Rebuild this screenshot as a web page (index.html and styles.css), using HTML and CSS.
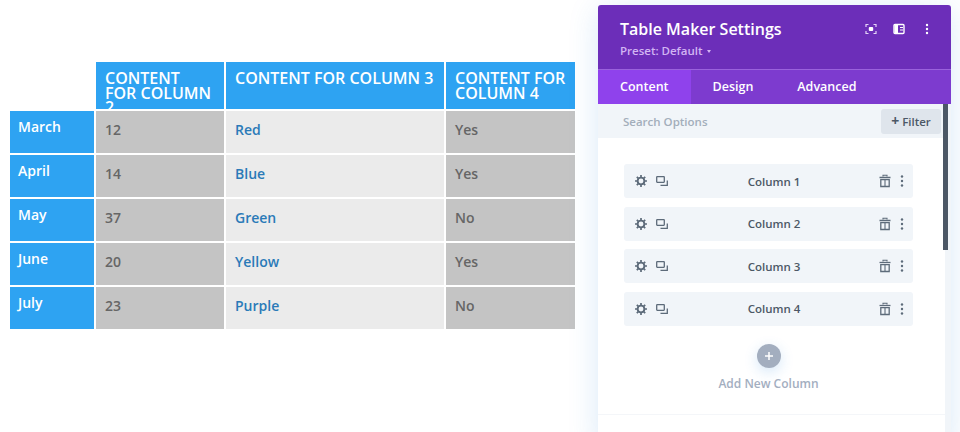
FILE: index.html
```html
<!DOCTYPE html>
<html lang="en">
<head>
<meta charset="utf-8">
<title>Table Maker Settings</title>
<link rel="stylesheet" href="styles.css">
</head>
<body>
<div class="page">
  <main class="table-wrap">
    <div class="grid">
      <div class="cell blank"></div>
      <div class="cell head">CONTENT FOR COLUMN 2</div>
      <div class="cell head">CONTENT FOR COLUMN 3</div>
      <div class="cell head">CONTENT FOR COLUMN 4</div>

      <div class="cell month">March</div><div class="cell dark">12</div><div class="cell light">Red</div><div class="cell dark">Yes</div>
      <div class="cell month">April</div><div class="cell dark">14</div><div class="cell light">Blue</div><div class="cell dark">Yes</div>
      <div class="cell month">May</div><div class="cell dark">37</div><div class="cell light">Green</div><div class="cell dark">No</div>
      <div class="cell month">June</div><div class="cell dark">20</div><div class="cell light">Yellow</div><div class="cell dark">Yes</div>
      <div class="cell month">July</div><div class="cell dark">23</div><div class="cell light">Purple</div><div class="cell dark">No</div>
    </div>
  </main>

  <aside class="panel">
    <header class="panel-head">
      <div>
        <h1 class="title">Table Maker Settings</h1>
        <div class="preset">Preset: Default <span class="caret"></span></div>
      </div>
      <div class="head-icons">
        <svg class="hicon" viewBox="0 0 12 12" width="12" height="12"><path d="M1 4V1.500H3.500M8.500 1.500H11V4M11 8V10.500H8.500M3.500 10.500H1V8" fill="none" stroke="#e4d4f7" stroke-width="1.200"/><rect x="3.800" y="4" width="4.400" height="4" rx="1" fill="#fff"/></svg>
        <svg class="hicon" viewBox="0 0 12 12" width="12" height="12"><rect x="1" y="1.500" width="10" height="9" rx="1" fill="none" stroke="#fff" stroke-width="1.400"/><rect x="1.500" y="2" width="3.500" height="8" fill="#fff"/><path d="M7 4.500h3M7 7h3" stroke="#fff"/></svg>
        <svg class="hicon" viewBox="0 0 12 12" width="12" height="12"><circle cx="6" cy="2" r="1.200" fill="#fff"/><circle cx="6" cy="6" r="1.200" fill="#fff"/><circle cx="6" cy="10" r="1.200" fill="#fff"/></svg>
      </div>
    </header>
    <nav class="tabs">
      <div class="tab active">Content</div>
      <div class="tab">Design</div>
      <div class="tab">Advanced</div>
    </nav>
    <div class="search">
      <span class="search-label">Search Options</span>
      <div class="filter"><span class="plus">+</span> Filter</div>
    </div>
    <div class="scrollthumb"></div>
    <div class="panel-body">
      <div class="rows">
        <div class="row">
          <span class="row-left">
            <svg viewBox="0 0 14 14" width="14" height="14"><use href="#gear"/></svg>
            <svg viewBox="0 0 14 14" width="14" height="14"><use href="#copy"/></svg>
          </span>
          <span class="row-label">Column 1</span>
          <span class="row-right">
            <svg viewBox="0 0 12 14" width="12" height="14"><use href="#trash"/></svg>
            <svg viewBox="0 0 4 14" width="4" height="14"><use href="#dots"/></svg>
          </span>
        </div>
        <div class="row">
          <span class="row-left">
            <svg viewBox="0 0 14 14" width="14" height="14"><use href="#gear"/></svg>
            <svg viewBox="0 0 14 14" width="14" height="14"><use href="#copy"/></svg>
          </span>
          <span class="row-label">Column 2</span>
          <span class="row-right">
            <svg viewBox="0 0 12 14" width="12" height="14"><use href="#trash"/></svg>
            <svg viewBox="0 0 4 14" width="4" height="14"><use href="#dots"/></svg>
          </span>
        </div>
        <div class="row">
          <span class="row-left">
            <svg viewBox="0 0 14 14" width="14" height="14"><use href="#gear"/></svg>
            <svg viewBox="0 0 14 14" width="14" height="14"><use href="#copy"/></svg>
          </span>
          <span class="row-label">Column 3</span>
          <span class="row-right">
            <svg viewBox="0 0 12 14" width="12" height="14"><use href="#trash"/></svg>
            <svg viewBox="0 0 4 14" width="4" height="14"><use href="#dots"/></svg>
          </span>
        </div>
        <div class="row">
          <span class="row-left">
            <svg viewBox="0 0 14 14" width="14" height="14"><use href="#gear"/></svg>
            <svg viewBox="0 0 14 14" width="14" height="14"><use href="#copy"/></svg>
          </span>
          <span class="row-label">Column 4</span>
          <span class="row-right">
            <svg viewBox="0 0 12 14" width="12" height="14"><use href="#trash"/></svg>
            <svg viewBox="0 0 4 14" width="4" height="14"><use href="#dots"/></svg>
          </span>
        </div>
      </div>
      <div class="add">
        <div class="add-btn">
          <svg viewBox="0 0 10 10" width="10" height="10"><path d="M5 1v8M1 5h8" stroke="#fff" stroke-width="1.500"/></svg>
        </div>
        <div class="add-label">Add New Column</div>
      </div>
      <div class="divider"></div>
    </div>
  </aside>
</div>
<svg class="defs" width="0" height="0">
  <defs>
    <g id="gear">
      <circle cx="7" cy="7" r="3.400" fill="none" stroke="#5d6b7a" stroke-width="1.900"/>
      <path d="M7 1v2.500M7 10.500V13M1 7h2.500M10.500 7H13M2.800 2.800l1.800 1.800M9.400 9.400l1.800 1.800M11.200 2.800L9.400 4.600M4.600 9.400l-1.800 1.800" stroke="#5d6b7a" stroke-width="1.700"/>
    </g>
    <g id="copy" fill="none" stroke="#5d6b7a" stroke-width="1.300">
      <rect x="1.700" y="2.700" width="7.600" height="5.600" rx="0.500"/>
      <path d="M12.300 6.500V11.300H5.500"/>
    </g>
    <g id="trash" fill="none" stroke="#5d6b7a">
      <path d="M0.500 3.500H11.500" stroke-width="1.300"/>
      <path d="M4 2.500V1.200H8V2.500" stroke-width="1.100"/>
      <path d="M1.800 5.700H10.200V12.500H1.800Z" stroke-width="1.300"/>
      <path d="M6 6V12" stroke-width="1.100"/>
    </g>
    <g id="dots" fill="#5d6b7a">
      <circle cx="2" cy="2.500" r="1.200"/>
      <circle cx="2" cy="7" r="1.200"/>
      <circle cx="2" cy="11.500" r="1.200"/>
    </g>
  </defs>
</svg>
</body>
</html>
```
FILE: styles.css
```css
* { box-sizing: border-box; }
html, body { margin: 0; padding: 0; height: 100%; overflow: hidden; background: #fff; }
body { font-family: "Open Sans", "Noto Sans", sans-serif; }
.defs { position: absolute; }

.page { display: flex; width: 960px; height: 432px; overflow: hidden; }

.table-wrap { width: 598px; flex: none; padding: 62px 0 0 10px; }
.grid {
  display: grid;
  width: 564px;
  grid-template-columns: 84px 128px 218px 129px;
  grid-template-rows: 47px repeat(5, 42px);
  gap: 2px;
  column-gap: 2px;
}
.cell { font-size: 14px; line-height: 14px; font-weight: 600; padding: 12px 8px; }
.blank { background: #fff; }
.head { background: #2ea3f2; color: #fff; font-size: 16px; line-height: 14.500px; font-weight: 600; padding: 9px 9px; }
.month { background: #2ea3f2; color: #fff; padding: 9px 8px; font-size: 14px; line-height: 14px; }
.dark { background: #c4c4c4; color: #666; padding: 12px 9px; }
.light { background: #ebebeb; color: #2a7ab8; padding: 12px 9px; }

.panel {
  width: 353px;
  height: 440px;
  margin-top: 5px;
  flex: none;
  position: relative;
  background: #f1f5f9;
  border-radius: 3px 3px 0 0;
  box-shadow: 0 5px 30px rgba(43, 135, 218, .18);
  overflow: hidden;
}
.panel-head {
  height: 64px;
  background: #6c2eb9;
  padding: 14px 18px 0 22px;
  display: flex;
  justify-content: space-between;
  align-items: flex-start;
}
.title { margin: 0; color: #fff; font-size: 16px; line-height: 21px; font-weight: 600; }
.preset { color: #d2b5f3; font-size: 11.500px; line-height: 14px; margin-top: 4px; font-weight: 600; }
.caret { display: inline-block; width: 0; height: 0; border: 2.500px solid transparent; border-top: 3px solid #d2b5f3; border-bottom: 0; vertical-align: 2px; margin-left: 1px; }
.head-icons { display: flex; gap: 16px; padding-top: 4px; }
.hicon { display: block; }

.tabs {
  display: flex;
  height: 35px;
  background: #7d3bcf;
  border-top: 1px solid #9a62dc;
}
.tab { color: #fff; font-size: 12.500px; font-weight: 600; line-height: 34px; padding: 0 22px; }
.tab.active { background: #8f42ec; padding-right: 22px; }
.tab:nth-child(2) { padding-left: 22px; padding-right: 0; }
.tab:nth-child(3) { padding-left: 44px; }

.search { height: 34px; display: flex; align-items: center; justify-content: space-between; padding: 0 10px 0 25px; background: #f1f5f9; }
.search-label { color: #a3aebb; font-size: 11.500px; font-weight: 600; }
.filter { width: 60px; height: 25px; background: #dfe5ec; border-radius: 3px; color: #4c5866; font-size: 11.500px; font-weight: 600; line-height: 25px; text-align: center; }
.plus { font-size: 14px; font-weight: 700; line-height: 14px; }

.scrollthumb { position: absolute; right: 3px; top: 99px; width: 5px; height: 146px; background: #4c5866; z-index: 2; }

.panel-body { width: 347px; height: 310px; background: #fff; padding-top: 26px; }
.rows { display: flex; flex-direction: column; gap: 8.500px; padding: 0 32px 0 26px; }
.row {
  height: 34px;
  background: #f1f5f9;
  border-radius: 3px;
  display: flex;
  align-items: center;
  justify-content: space-between;
  padding: 0 9px 0 10px;
  position: relative;
}
.row-left, .row-right { display: flex; align-items: center; }
.row-left { gap: 7px; }
.row-right { gap: 9px; }
.row svg { display: block; }
.row-label { color: #4c5866; font-size: 11.500px; font-weight: 600; }

.add { display: flex; flex-direction: column; align-items: center; padding-top: 18px; padding-right: 6px; }
.add-btn {
  width: 24px; height: 24px; border-radius: 50%;
  background: #a3aebf;
  display: flex; align-items: center; justify-content: center;
  box-shadow: 0 4px 14px rgba(43, 135, 218, .2);
}
.add-label { color: #a3aebf; font-size: 12px; font-weight: 600; margin-top: 7px; line-height: 17px; }
.divider { height: 1px; background: #f4f6f9; margin-top: 22px; }
```
